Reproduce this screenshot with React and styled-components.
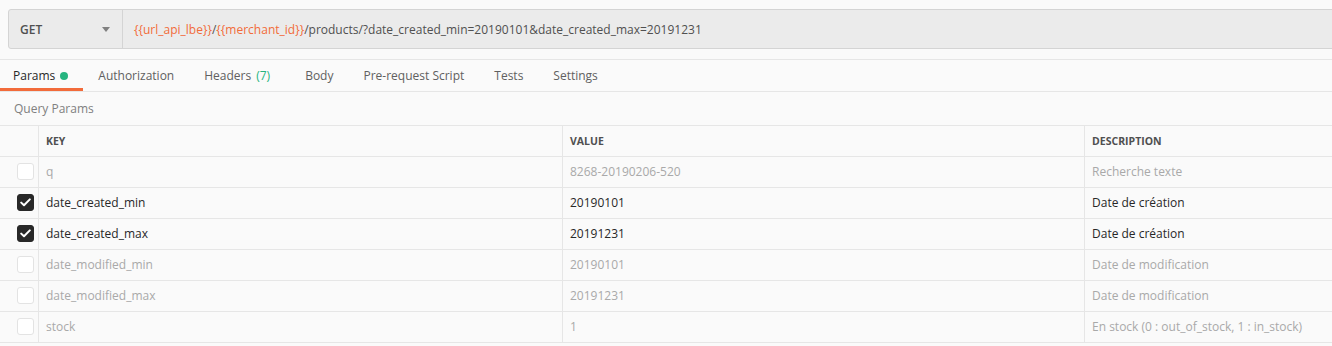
import styled, { createGlobalStyle } from "styled-components";

const Global = createGlobalStyle`
  body {
    margin: 0;
    background: #fafafa;
    font-family: "Open Sans", "Liberation Sans", sans-serif;
    color: #505050;
    overflow: hidden;
  }
`;

const Page = styled.div`
  width: 1332px;
  height: 346px;
  overflow: hidden;
  background: #fafafa;
`;

const UrlBar = styled.div`
  display: flex;
  height: 38px;
  margin: 9px -20px 0 8px;
  border: 1px solid #d4d4d4;
  border-radius: 3px;
  background: #ebebeb;
`;

const Method = styled.div`
  display: flex;
  align-items: center;
  justify-content: space-between;
  width: 114px;
  box-sizing: border-box;
  padding: 0 12px 0 11px;
  border-right: 1px solid #d4d4d4;
  font-size: 12px;
  font-weight: 600;
  color: #505050;
`;

const Caret = styled.span`
  width: 0;
  height: 0;
  border-left: 4px solid transparent;
  border-right: 4px solid transparent;
  border-top: 5px solid #808080;
`;

const Url = styled.div`
  display: flex;
  align-items: center;
  padding-left: 11px;
  font-size: 12px;
  color: #505050;
  white-space: nowrap;
`;

const Var = styled.span`
  color: #f26b3a;
`;

const Tabs = styled.div`
  display: flex;
  height: 31px;
  margin-top: 10px;
  border-top: 1px solid #e6e6e6;
  border-bottom: 1px solid #e6e6e6;
`;

const Tab = styled.div`
  display: flex;
  align-items: center;
  gap: 5px;
  padding: 0 ${(p) => p.$pr || 15}px 0 ${(p) => p.$pl || 15}px;
  font-size: 12px;
  color: ${(p) => (p.$active ? "#282828" : "#606060")};
  box-shadow: ${(p) => (p.$active ? "inset 0 -3px 0 #f26b3a" : "none")};
`;

const Dot = styled.span`
  width: 8px;
  height: 8px;
  border-radius: 50%;
  background: #26b47f;
`;

const Count = styled.span`
  color: #26b47f;
`;

const Section = styled.div`
  height: 33px;
  display: flex;
  align-items: center;
  padding-left: 14px;
  font-size: 12px;
  color: #808080;
`;

const Table = styled.div`
  display: grid;
  grid-template-columns: 38px 524px 522px 1fr;
  border-top: 1px solid #e6e6e6;
`;

const Cell = styled.div`
  height: 30px;
  box-sizing: border-box;
  display: flex;
  align-items: center;
  padding-left: ${(p) => (p.$check ? 17 : 7)}px;
  padding-bottom: ${(p) => (p.$head ? 0 : 2)}px;
  border-bottom: 1px solid #e6e6e6;
  border-left: ${(p) => (p.$check ? "none" : "1px solid #e6e6e6")};
  font-size: ${(p) => (p.$head ? 10.5 : 12)}px;
  font-weight: ${(p) => (p.$head ? 700 : 400)};
  color: ${(p) => (p.$head ? "#505050" : p.$off ? "#a9a9a9" : "#282828")};
  white-space: nowrap;
  overflow: hidden;
  height: 31px;
`;

const Box = styled.span`
  width: 17px;
  height: 17px;
  box-sizing: border-box;
  border-radius: 3px;
  border: 1px solid ${(p) => (p.$on ? "#282828" : "#e3e3e3")};
  background: ${(p) => (p.$on ? "#282828" : "#fff")};
  display: flex;
  align-items: center;
  justify-content: center;
`;

const rows = [
  ["q", "8268-20190206-520", "Recherche texte", false],
  ["date_created_min", "20190101", "Date de création", true],
  ["date_created_max", "20191231", "Date de création", true],
  ["date_modified_min", "20190101", "Date de modification", false],
  ["date_modified_max", "20191231", "Date de modification", false],
  ["stock", "1", "En stock (0 : out_of_stock, 1 : in_stock)", false],
];

function Check({ on }) {
  return (
    <Box $on={on}>
      {on && (
        <svg width="11" height="9" viewBox="0 0 11 9">
          <path
            d="M1.2 4.6 L4 7.3 L9.8 1.4"
            fill="none"
            stroke="#fff"
            strokeWidth="2"
            strokeLinecap="round"
            strokeLinejoin="round"
          />
        </svg>
      )}
    </Box>
  );
}

export default function App() {
  return (
    <Page>
      <Global />
      <UrlBar>
        <Method>
          GET
          <Caret />
        </Method>
        <Url>
          <Var>{"{{url_api_lbe}}"}</Var>/<Var>{"{{merchant_id}}"}</Var>
          /products/?date_created_min=20190101&date_created_max=20191231
        </Url>
      </UrlBar>
      <Tabs>
        <Tab $active $pl={13}>
          Params <Dot />
        </Tab>
        <Tab>Authorization</Tab>
        <Tab $pr={20}>
          Headers <Count>(7)</Count>
        </Tab>
        <Tab>Body</Tab>
        <Tab>Pre-request Script</Tab>
        <Tab>Tests</Tab>
        <Tab>Settings</Tab>
      </Tabs>
      <Section>Query Params</Section>
      <Table>
        <Cell $check $head />
        <Cell $head>KEY</Cell>
        <Cell $head>VALUE</Cell>
        <Cell $head>DESCRIPTION</Cell>
        {rows.map(([k, v, d, on]) => (
          <>
            <Cell $check key={k + "c"}>
              <Check on={on} />
            </Cell>
            <Cell $off={!on}>{k}</Cell>
            <Cell $off={!on}>{v}</Cell>
            <Cell $off={!on}>{d}</Cell>
          </>
        ))}
      </Table>
    </Page>
  );
}
